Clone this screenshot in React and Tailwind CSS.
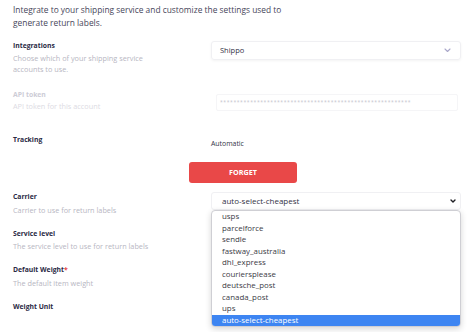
import React from 'react';

const carriers = [
    'usps',
    'parcelforce',
    'sendle',
    'fastway_australia',
    'dhl_express',
    'couriersplease',
    'deutsche_post',
    'canada_post',
    'ups',
    'auto-select-cheapest',
];

const Label = ({ title, desc, muted, required, gap = 'mt-[2px]' }) => (
    <div>
        <h3 className={`text-[6.8px] font-bold leading-[10px] ${muted ? 'text-[#cdccd6]' : 'text-[#2a2944]'}`}>
            {title}
            {required && <span className="text-[#e84545]">*</span>}
        </h3>
        {desc && (
            <p className={`${gap} text-[7.3px] leading-[11px] ${muted ? 'text-[#dcdbe3]' : 'text-[#b7b6c2]'}`}>{desc}</p>
        )}
    </div>
);

const App = () => {
    return (
        <div className="w-[474px] h-[332px] overflow-hidden bg-white px-[13px] pt-[3px] text-[#3a3a4a]" style={{ fontFamily: '"Open Sans", "Liberation Sans", sans-serif' }}>
            <p className="w-[272px] text-[8.4px] leading-[13px] text-[#47465a]">
                Integrate to your shipping service and customize the settings used to generate return labels.
            </p>

            {/* Integrations */}
            <div className="flex mt-[11px]">
                <div className="w-[198px] pt-[1px]">
                    <Label title="Integrations" desc={<>Choose which of your shipping service<br />accounts to use.</>} />
                </div>
                <div className="flex-1 pt-[1px]">
                    <div className="h-[19px] rounded-[3px] border border-[#f0f0f3] shadow-[0_1px_3px_rgba(0,0,0,0.05)] flex items-center justify-between pl-[8px] pr-[9px]">
                        <span className="text-[7.5px] text-[#333245]">Shippo</span>
                        <svg width="7" height="5" viewBox="0 0 7 5" fill="none">
                            <path d="M1 1l2.5 2.5L6 1" stroke="#a9a7c9" strokeWidth="1.1" strokeLinecap="round" strokeLinejoin="round" />
                        </svg>
                    </div>
                </div>
            </div>

            {/* API token */}
            <div className="flex mt-[15px]">
                <div className="w-[198px]">
                    <Label muted title="API token" desc="API token for this account" gap="mt-[1px]" />
                </div>
                <div className="flex-1 pl-[5px] pr-[3px] pt-[4px]">
                    <div className="h-[17px] rounded-[2px] border border-[#f5f5f7] flex items-center pl-[3px] overflow-hidden">
                        <span className="text-[5px] tracking-[0.6px] text-[#c4c3cd]">*********************************************************</span>
                    </div>
                </div>
            </div>

            {/* Tracking */}
            <div className="flex mt-[23px]">
                <div className="w-[198px]">
                    <Label title="Tracking" />
                </div>
                <div className="flex-1 pt-[4px]">
                    <span className="block text-[6.9px] leading-[10px] text-[#333245]">Automatic</span>
                </div>
            </div>

            {/* Forget button */}
            <div className="flex mt-[13px] pl-[176px]">
                <button className="w-[108px] h-[21px] rounded-[3px] bg-[#e94848] text-white text-[7.2px] font-bold">
                    FORGET
                </button>
            </div>

            {/* Carrier */}
            <div className="flex mt-[9px]">
                <div className="w-[198px]">
                    <Label title="Carrier" desc="Carrier to use for return labels" gap="mt-[3px]" />
                </div>
                <div className="flex-1 relative">
                    <div className="h-[18px] rounded-[3px] border border-[#f0f0f3] flex items-center justify-between pl-[10px] pr-[4px]">
                        <span className="text-[8px] text-[#333245]">auto-select-cheapest</span>
                        <svg width="6" height="4" viewBox="0 0 6 4" fill="none">
                            <path d="M1 1l2 2 2-2" stroke="#1f1f24" strokeWidth="1.4" strokeLinecap="round" strokeLinejoin="round" />
                        </svg>
                    </div>
                    <ul className="absolute left-0 right-0 top-[18px] z-10 bg-white border border-[#cfcfd4] rounded-[4px] shadow-[0_2px_6px_rgba(0,0,0,0.16)] overflow-hidden">
                        {carriers.map((c, i) => (
                            <li
                                key={c}
                                className={`h-[11.5px] leading-[11.5px] pl-[10px] text-[7.9px] ${i === carriers.length - 1 ? 'bg-[#3d85f2] text-white' : 'text-[#3b3b45]'}`}
                            >
                                {c}
                            </li>
                        ))}
                    </ul>
                </div>
            </div>

            {/* Service level */}
            <div className="mt-[13px]">
                <Label title="Service level" desc="The service level to use for return labels" />
            </div>

            {/* Default Weight */}
            <div className="mt-[13px]">
                <Label required title="Default Weight" desc="The default item weight" gap="mt-[3px]" />
            </div>

            {/* Weight Unit */}
            <div className="mt-[13px]">
                <Label title="Weight Unit" />
            </div>
        </div>
    );
};

export default App;
